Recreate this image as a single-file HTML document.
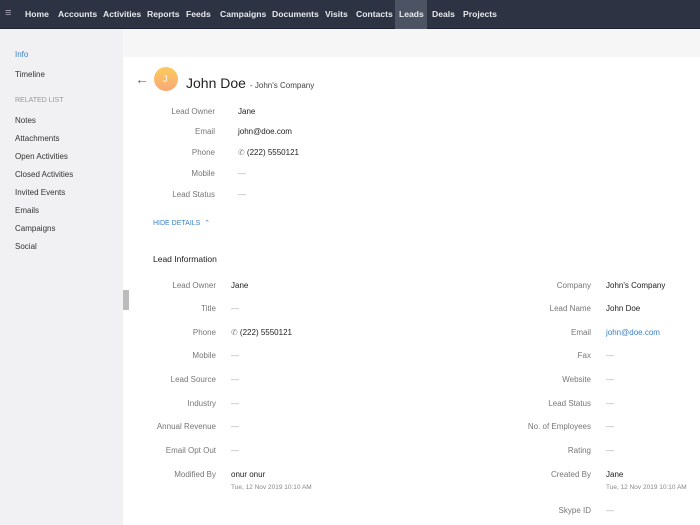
<!DOCTYPE html>
<html><head><style>
*{margin:0;padding:0;box-sizing:border-box}
body{width:700px;height:525px;overflow:hidden;font-family:"Liberation Sans",sans-serif;background:#fff;position:relative;color:#222}
.nav{position:absolute;left:0;top:0;width:700px;height:29px;background:#2d3342;border-bottom:1px solid #1d2230}
.nav span{position:absolute;top:9px;font-size:8.6px;font-weight:bold;color:#e8e9ee}
.side{position:absolute;left:0;top:29px;width:123px;height:496px;background:#f1f1f3}
.side div{position:absolute;left:15px;font-size:8px;color:#333}
.strip{position:absolute;left:123px;top:29px;width:577px;height:28px;background:#f6f6f7}
.t{position:absolute;font-size:8px;white-space:nowrap}
.l{color:#777;text-align:right;width:120px}
.v{color:#222}
.d{color:#aaa}
</style></head><body>
<div class="nav">
<span style="left:5px;font-weight:normal;top:7px;font-size:11px;color:#aab">≡</span>
<span style="left:25px">Home</span><span style="left:58px">Accounts</span><span style="left:103px">Activities</span><span style="left:147px">Reports</span><span style="left:186px">Feeds</span><span style="left:220px">Campaigns</span><span style="left:272px">Documents</span><span style="left:325px">Visits</span><span style="left:356px">Contacts</span>
<div style="position:absolute;left:395px;top:0;width:32px;height:29px;background:#4c5363"></div>
<span style="left:399px">Leads</span><span style="left:432px">Deals</span><span style="left:463px">Projects</span>
</div>
<div class="side">
<div style="top:21px;color:#3b82c8">Info</div>
<div style="top:41px">Timeline</div>
<div style="top:68px;color:#999;font-size:7px">RELATED LIST</div>
<div style="top:87px">Notes</div><div style="top:105px">Attachments</div><div style="top:123px">Open Activities</div><div style="top:141px">Closed Activities</div><div style="top:159px">Invited Events</div><div style="top:177px">Emails</div><div style="top:195px">Campaigns</div><div style="top:213px">Social</div>
</div>
<div style="position:absolute;left:123px;top:290px;width:6px;height:20px;background:#bbb"></div>
<div class="strip"></div>
<div class="t" style="left:135px;top:71px;font-size:14px;color:#666">←</div>
<div style="position:absolute;left:154px;top:67px;width:24px;height:24px;border-radius:50%;background:linear-gradient(#fbcb5e,#f8a877)"></div>
<div class="t" style="left:163px;top:74px;color:#fff;font-size:9px">J</div>
<div class="t" style="left:186px;top:75px;font-size:14px;color:#222">John Doe</div>
<div class="t" style="left:250px;top:81px;font-size:8px;color:#444">- John's Company</div>

<div class="t l" style="left:95px;top:107px">Lead Owner</div><div class="t v" style="left:238px;top:107px">Jane</div>
<div class="t l" style="left:95px;top:127px">Email</div><div class="t v" style="left:238px;top:127px">john@doe.com</div>
<div class="t l" style="left:95px;top:148px">Phone</div><div class="t v" style="left:238px;top:148px"><span style="color:#888">✆</span> (222) 5550121</div>
<div class="t l" style="left:95px;top:169px">Mobile</div><div class="t d" style="left:238px;top:169px">—</div>
<div class="t l" style="left:95px;top:190px">Lead Status</div><div class="t d" style="left:238px;top:190px">—</div>
<div class="t" style="left:153px;top:219px;font-size:7px;color:#3b82c8">HIDE DETAILS &nbsp;⌃</div>
<div class="t" style="left:153px;top:254px;font-size:8.5px;color:#222">Lead Information</div>

<div class="t l" style="left:96px;top:281px">Lead Owner</div><div class="t v" style="left:231px;top:281px">Jane</div>
<div class="t l" style="left:96px;top:304px">Title</div><div class="t d" style="left:231px;top:304px">—</div>
<div class="t l" style="left:96px;top:328px">Phone</div><div class="t v" style="left:231px;top:328px"><span style="color:#888">✆</span> (222) 5550121</div>
<div class="t l" style="left:96px;top:351px">Mobile</div><div class="t d" style="left:231px;top:351px">—</div>
<div class="t l" style="left:96px;top:375px">Lead Source</div><div class="t d" style="left:231px;top:375px">—</div>
<div class="t l" style="left:96px;top:399px">Industry</div><div class="t d" style="left:231px;top:399px">—</div>
<div class="t l" style="left:96px;top:422px">Annual Revenue</div><div class="t d" style="left:231px;top:422px">—</div>
<div class="t l" style="left:96px;top:446px">Email Opt Out</div><div class="t d" style="left:231px;top:446px">—</div>
<div class="t l" style="left:96px;top:470px">Modified By</div><div class="t v" style="left:231px;top:470px">onur onur</div>
<div class="t" style="left:231px;top:484px;font-size:6.5px;color:#888">Tue, 12 Nov 2019 10:10 AM</div>

<div class="t l" style="left:471px;top:281px">Company</div><div class="t v" style="left:606px;top:281px">John's Company</div>
<div class="t l" style="left:471px;top:304px">Lead Name</div><div class="t v" style="left:606px;top:304px">John Doe</div>
<div class="t l" style="left:471px;top:328px">Email</div><div class="t" style="left:606px;top:328px;color:#3b82c8">john@doe.com</div>
<div class="t l" style="left:471px;top:351px">Fax</div><div class="t d" style="left:606px;top:351px">—</div>
<div class="t l" style="left:471px;top:375px">Website</div><div class="t d" style="left:606px;top:375px">—</div>
<div class="t l" style="left:471px;top:399px">Lead Status</div><div class="t d" style="left:606px;top:399px">—</div>
<div class="t l" style="left:471px;top:422px">No. of Employees</div><div class="t d" style="left:606px;top:422px">—</div>
<div class="t l" style="left:471px;top:446px">Rating</div><div class="t d" style="left:606px;top:446px">—</div>
<div class="t l" style="left:471px;top:470px">Created By</div><div class="t v" style="left:606px;top:470px">Jane</div>
<div class="t" style="left:606px;top:484px;font-size:6.5px;color:#888">Tue, 12 Nov 2019 10:10 AM</div>
<div class="t l" style="left:471px;top:506px">Skype ID</div><div class="t d" style="left:606px;top:506px">—</div>
</body></html>
